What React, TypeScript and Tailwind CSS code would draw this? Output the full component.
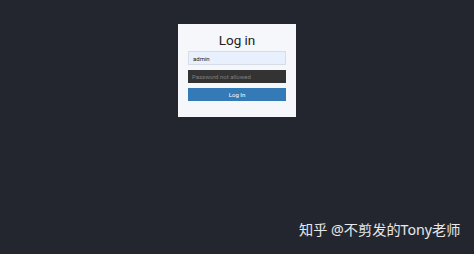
import React from 'react';

const App = () => {
  return (
    <div
      className="relative h-[254px] w-full overflow-hidden bg-[#23262e]"
      style={{ fontFamily: 'Roboto, "Liberation Sans", sans-serif' }}
    >
      <div className="flex justify-center pt-[24px]">
        <div className="flex w-[118px] flex-col items-stretch bg-[#f5f7fa] px-[10px] pb-[16px] pt-[8px]">
          <h1 className="text-center text-[13.5px] leading-[17px] text-[#222]">Log in</h1>
          <div className="mt-[2px] flex h-[14px] items-center border border-[#d6dde8] bg-[#e8f0fe] px-[4px] text-[6px] text-[#222]">
            admin
          </div>
          <div className="mt-[5px] flex h-[13px] items-center bg-[#333333] px-[4px] text-[6px] text-[#808080]">
            Password not allowed
          </div>
          <button className="mt-[5px] flex h-[13px] items-center justify-center bg-[#337ab7] text-[6px] text-white">
            Log In
          </button>
        </div>
      </div>
      <div
        className="absolute left-[299px] top-[221px] text-[14.2px] leading-[18px] text-white/90"
        style={{ fontFamily: '"Noto Sans", "Noto Sans CJK SC", sans-serif' }}
      >
        知乎 @不剪发的Tony老师
      </div>
    </div>
  );
};

export default App;
